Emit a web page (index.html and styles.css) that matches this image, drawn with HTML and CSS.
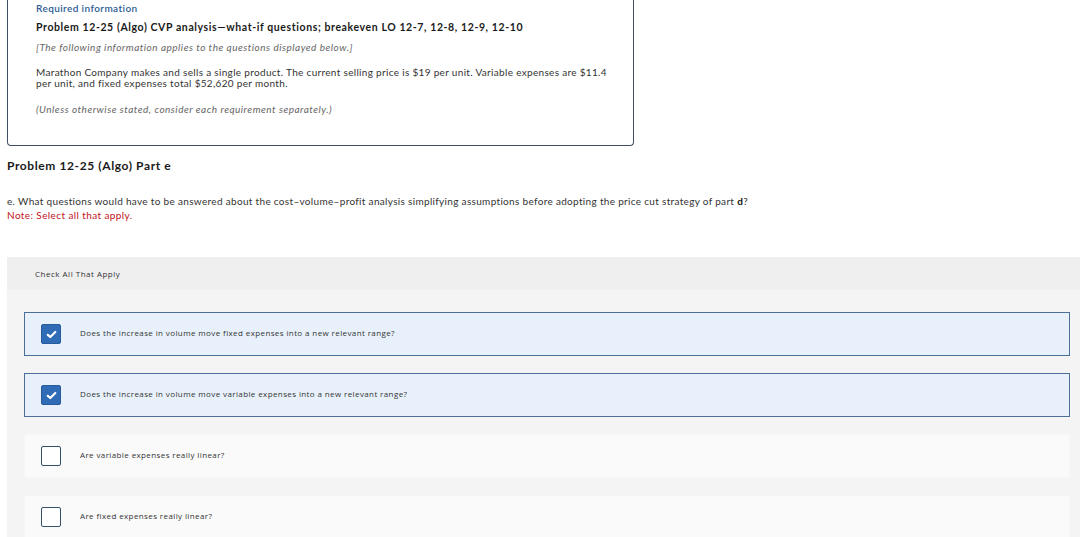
FILE: index.html
```
<!DOCTYPE html>
<html>
<head>
<meta charset="utf-8">
<link rel="stylesheet" href="styles.css">
</head>
<body>
<div class="info-box">
  <div class="req">Required information</div>
  <div class="title">Problem 12-25 (Algo) CVP analysis—what-if questions; breakeven LO 12-7, 12-8, 12-9, 12-10</div>
  <div class="note-it">[The following information applies to the questions displayed below.]</div>
  <p class="para">Marathon Company makes and sells a single product. The current selling price is $19 per unit. Variable expenses are $11.4 per unit, and fixed expenses total $52,620 per month.</p>
  <div class="note-it sep">(Unless otherwise stated, consider each requirement separately.)</div>
</div>
<h2 class="part">Problem 12-25 (Algo) Part e</h2>
<p class="question">e. What questions would have to be answered about the cost–volume–profit analysis simplifying assumptions before adopting the price cut strategy of part <b>d</b>?</p>
<p class="select-note">Note: Select all that apply.</p>
<div class="panel">
  <div class="panel-head">Check All That Apply</div>
  <div class="options">
    <div class="option checked">
      <span class="box"><svg width="11" height="9" viewBox="0 0 11 9"><path d="M1.8 4.8 L4.3 7 L9.3 2" fill="none" stroke="#fff" stroke-width="2.2" stroke-linecap="round" stroke-linejoin="round"/></svg></span>
      <span class="label">Does the increase in volume move fixed expenses into a new relevant range?</span>
    </div>
    <div class="option checked">
      <span class="box"><svg width="11" height="9" viewBox="0 0 11 9"><path d="M1.8 4.8 L4.3 7 L9.3 2" fill="none" stroke="#fff" stroke-width="2.2" stroke-linecap="round" stroke-linejoin="round"/></svg></span>
      <span class="label">Does the increase in volume move variable expenses into a new relevant range?</span>
    </div>
    <div class="option">
      <span class="box"></span>
      <span class="label">Are variable expenses really linear?</span>
    </div>
    <div class="option">
      <span class="box"></span>
      <span class="label">Are fixed expenses really linear?</span>
    </div>
  </div>
</div>
</body>
</html>
```
FILE: styles.css
```
html, body {
  margin: 0;
  padding: 0;
  background: #fff;
  overflow: hidden;
}
body {
  font-family: Lato, "Liberation Sans", sans-serif;
  color: #333;
  padding-left: 7px;
  height: 537px;
}
.info-box {
  width: 597px;
  border: 1px solid #3d4f60;
  border-top: none;
  border-radius: 0 0 4px 4px;
  padding: 2px 0 0 28px;
  height: 143px;
}
.req {
  color: #2d5c94;
  font-size: 10px;
  letter-spacing: 0.4px;
  line-height: 12px;
  font-weight: 600;
}
.title {
  font-size: 10.5px;
  letter-spacing: 0.6px;
  font-weight: 700;
  color: #1a1a1a;
  line-height: 12px;
  margin-top: 7px;
}
.note-it {
  font-style: italic;
  font-size: 10px;
  letter-spacing: 0.5px;
  color: #666;
  line-height: 12px;
  margin-top: 8px;
}
.para {
  font-size: 10px;
  letter-spacing: 0.32px;
  line-height: 11px;
  margin: 14px 0 0;
  color: #333;
  width: 572px;
}
.note-it.sep {
  margin-top: 14px;
}
.part {
  font-size: 12px;
  letter-spacing: 0.6px;
  font-weight: 700;
  color: #1a1a1a;
  margin: 13px 0 0;
  line-height: 14px;
}
.question {
  font-size: 10px;
  letter-spacing: 0.32px;
  line-height: 12px;
  margin: 22px 0 0;
  color: #333;
}
.question b { font-weight: 700; color: #111; }
.select-note {
  font-size: 10px;
  letter-spacing: 0.4px;
  line-height: 12px;
  margin: 2px 0 0;
  color: #c1121c;
}
.panel {
  margin-top: 36px;
  background: #f4f4f4;
  height: 280px;
  font-family: "Open Sans", "DejaVu Sans", sans-serif;
}
.panel-head {
  background: #efefef;
  height: 33px;
  display: flex;
  align-items: center;
  padding-left: 28px;
  font-size: 8px;
  letter-spacing: 0.5px;
  color: #333;
}
.options {
  display: flex;
  flex-direction: column;
  gap: 17px;
  padding: 22px 10px 0 17px;
}
.option {
  height: 44px;
  box-sizing: border-box;
  display: flex;
  align-items: center;
  background: #fafafa;
  border: 1px solid #f6f6f6;
  padding-left: 16px;
}
.option.checked {
  background: #e8f1fb;
  border: 1px solid #4b6f98;
}
.box {
  width: 20px;
  height: 20px;
  box-sizing: border-box;
  border: 1.5px solid #34506a;
  border-radius: 2px;
  background: #fff;
  display: flex;
  align-items: center;
  justify-content: center;
  flex: none;
}
.option.checked .box {
  background: #2f6cb5;
  border-color: #275c9c;
}
.label {
  margin-left: 19px;
  margin-bottom: 4px;
  font-size: 8px;
  letter-spacing: 0.39px;
  color: #333;
}
```
